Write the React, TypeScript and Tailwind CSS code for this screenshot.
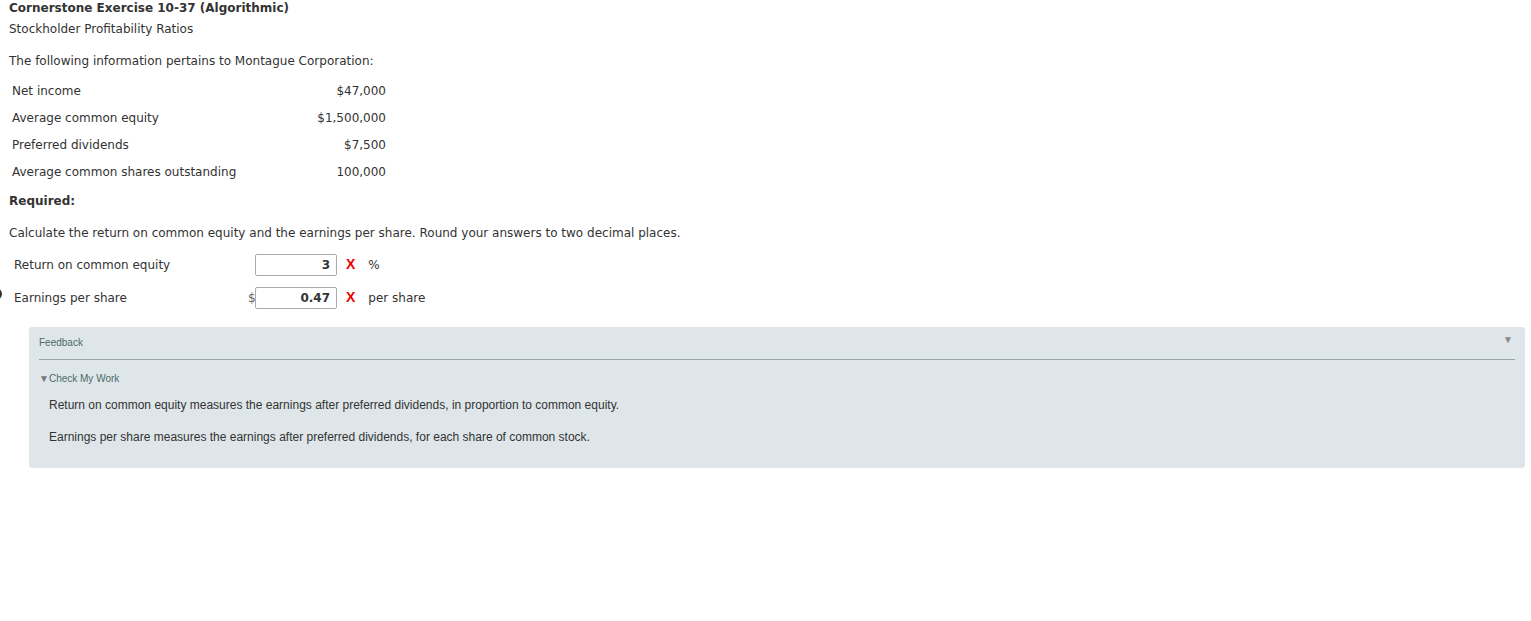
import React from 'react';

const facts = [
  { label: 'Net income', value: '$47,000' },
  { label: 'Average common equity', value: '$1,500,000' },
  { label: 'Preferred dividends', value: '$7,500' },
  { label: 'Average common shares outstanding', value: '100,000' },
];

function AnswerRow({ label, prefix, value, unit }: { label: string; prefix?: string; value: string; unit: string }) {
  return (
    <div className="flex items-center h-[33px]">
      <div className="w-[248px] pl-[14px]">{label}</div>
      <div className="w-[7px] text-right text-[#666]">{prefix}</div>
      <div className="w-[82px] h-[22px] border border-[#aaa] rounded-[2px] bg-white flex items-center justify-end pr-[6px] font-bold text-[#333]">
        {value}
      </div>
      <span className="ml-[9px] text-[#e00] font-bold text-[14px]" style={{ fontFamily: 'Arial, "Liberation Sans", sans-serif' }}>X</span>
      <span className="ml-[13px]">{unit}</span>
    </div>
  );
}

export default function App() {
  return (
    <div className="min-h-screen bg-white text-[#333] text-[12px] relative" style={{ fontFamily: '"DejaVu Sans", Verdana, sans-serif' }}>
      <div className="px-[9px] pt-0">
        <h1 className="font-bold text-[12px] leading-[16px] text-[#333]">Cornerstone Exercise 10-37 (Algorithmic)</h1>
        <div className="mt-[5px] leading-[16px]">Stockholder Profitability Ratios</div>
        <p className="mt-[16px] leading-[16px]">The following information pertains to Montague Corporation:</p>

        {/* Given data */}
        <div className="mt-[8px] w-[374px] ml-[3px]">
          {facts.map((f) => (
            <div key={f.label} className="flex justify-between h-[27px] items-center">
              <span>{f.label}</span>
              <span>{f.value}</span>
            </div>
          ))}
        </div>

        <div className="mt-[8px] font-bold leading-[16px]">Required:</div>
        <p className="mt-[16px] leading-[16px]">Calculate the return on common equity and the earnings per share. Round your answers to two decimal places.</p>
      </div>

      <div className="mt-[7px] relative">
        <AnswerRow label="Return on common equity" value="3" unit="%" />
        <AnswerRow label="Earnings per share" prefix="$" value="0.47" unit="per share" />
        <div className="absolute left-[-6px] top-[40px] w-[8px] h-[12px] border-r-[2px] border-[#333] rounded-r-full"></div>
      </div>

      {/* Feedback panel */}
      <div className="mt-[13px] ml-[29px] mr-[6px] bg-[#dfe6e9] rounded-[3px] pt-[8px] pb-[22px] px-[10px]" style={{ fontFamily: 'Arial, "Liberation Sans", sans-serif' }}>
        <div className="flex justify-between items-center h-[15px]">
          <span className="text-[10px] text-[#4d6a6a]">Feedback</span>
          <span className="text-[10px] text-[#888] mr-[2px] mt-[-6px]">▼</span>
        </div>
        <div className="mt-[9px] border-t border-[#9aa5a8]"></div>
        <div className="mt-[11px] text-[10px] text-[#4d6a6a] flex items-center">
          <span className="text-[10px] leading-[10px] text-[#777]">▼</span>
          <span>Check My Work</span>
        </div>
        <p className="mt-[10px] ml-[10px] text-[12px] text-[#333]">Return on common equity measures the earnings after preferred dividends, in proportion to common equity.</p>
        <p className="mt-[14px] ml-[10px] text-[12px] text-[#333]">Earnings per share measures the earnings after preferred dividends, for each share of common stock.</p>
      </div>
    </div>
  );
}
